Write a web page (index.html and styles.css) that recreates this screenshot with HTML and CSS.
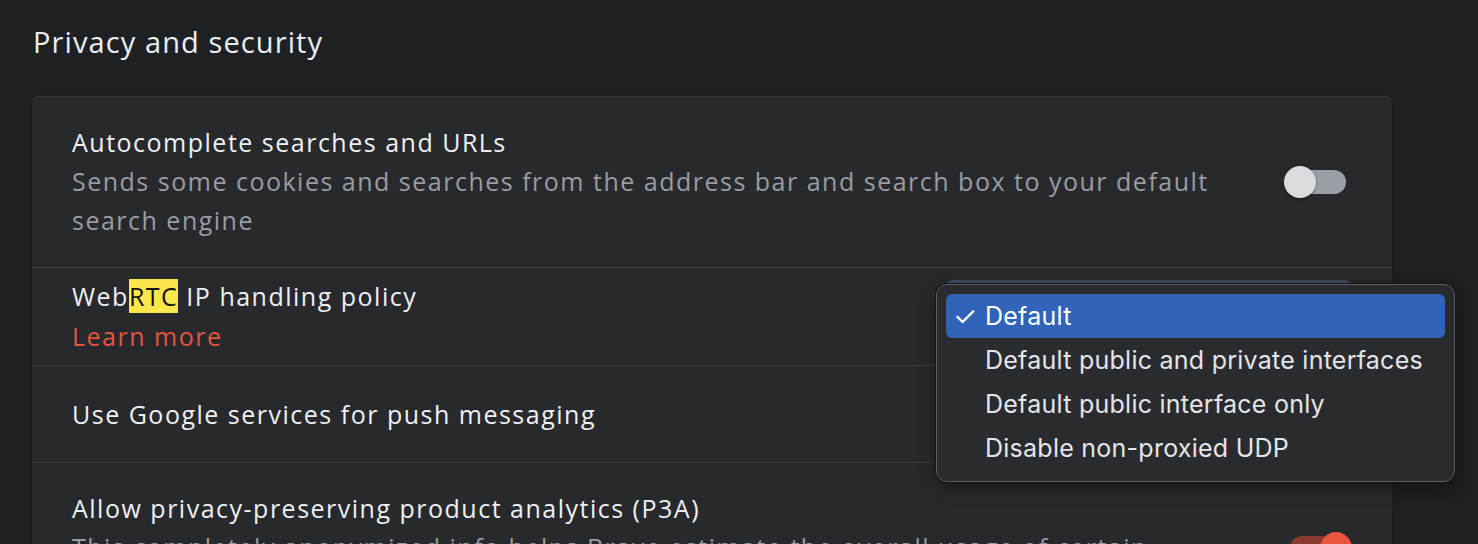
FILE: index.html
```html
<!DOCTYPE html>
<html>
<head>
<meta charset="utf-8">
<link rel="stylesheet" href="styles.css">
</head>
<body>
<div class="page">
  <h1 class="heading">Privacy and security</h1>
  <div class="card">
    <div class="row row-tall">
      <div class="text">
        <div class="title">Autocomplete searches and URLs</div>
        <div class="desc">Sends some cookies and searches from the address bar and search box to your default search engine</div>
      </div>
      <div class="toggle"><span class="knob"></span></div>
    </div>
    <div class="row row-webrtc">
      <div class="text">
        <div class="title">Web<mark class="hl">RTC</mark> IP handling policy</div>
        <div class="link">Learn more</div>
      </div>
      <div class="select"></div>
    </div>
    <div class="row row-mid">
      <div class="text">
        <div class="title">Use Google services for push messaging</div>
      </div>
    </div>
    <div class="row row-tall">
      <div class="text">
        <div class="title">Allow privacy-preserving product analytics (P3A)</div>
        <div class="desc">This completely anonymized info helps Brave estimate the overall usage of certain features and make them better for you</div>
      </div>
      <div class="toggle on"><span class="knob"></span></div>
    </div>
  </div>
  <div class="menu">
    <div class="item selected"><span class="check">✓</span>Default</div>
    <div class="item"><span class="check"></span>Default public and private interfaces</div>
    <div class="item"><span class="check"></span>Default public interface only</div>
    <div class="item"><span class="check"></span>Disable non-proxied UDP</div>
  </div>
</div>
</body>
</html>
```
FILE: styles.css
```css
html, body {
  margin: 0;
  padding: 0;
  background: #1f2024;
  overflow: hidden;
}
body {
  font-family: "Open Sans", "Lato", sans-serif;
  color: #e8eaed;
}
.page {
  position: relative;
  padding: 22px 86px 0 32px;
}
.heading {
  margin: 0 0 0 1px;
  font-weight: 400;
  font-size: 29px;
  line-height: 40px;
  letter-spacing: 1.1px;
  color: #eceef1;
}
.card {
  margin-top: 34px;
  background: #28292d;
  border-radius: 6px;
  border-top: 1px solid #36373b;
  box-shadow: 0 0 3px rgba(0,0,0,0.35);
}
.row {
  display: flex;
  align-items: center;
  padding: 0 46px 0 40px;
  border-top: 1px solid #3c3d41;
}
.row:first-child { border-top: none; }
.row-tall { padding-top: 26px; padding-bottom: 27px; }
.row-webrtc { padding-top: 9px; padding-bottom: 9px; align-items: flex-start; }
.row-mid { height: 96px; }
.text { flex: 1; min-width: 0; }
.title, .desc, .link {
  font-size: 25px;
  letter-spacing: 1.5px;
  line-height: 39px;
}
.title { color: #eef0f3; }
.desc { color: #9a9ca1; padding-right: 30px; }
.link { line-height: 40px; color: #e2553f; }
.hl {
  background: #fbe64d;
  color: #111;
  padding: 0;
}
.toggle {
  position: relative;
  width: 56px;
  height: 24px;
  border-radius: 12px;
  background: #9aa0a6;
  margin-left: 24px;
  flex: none;
}
.toggle .knob {
  position: absolute;
  left: -6px;
  top: -4px;
  width: 32px;
  height: 32px;
  border-radius: 50%;
  background: #dadce0;
  box-shadow: 0 1px 3px rgba(0,0,0,0.4);
}
.toggle.on { background: #8a3a2e; }
.toggle.on .knob { background: #e9553d; left: 30px; }
.select {
  width: 407px;
  height: 44px;
  margin-top: 3px;
  margin-right: -6px;
  border-radius: 8px;
  background: #414b61;
  flex: none;
}
.menu {
  position: absolute;
  left: 936px;
  top: 284px;
  width: 499px;
  padding: 9px 9px 11px;
  background: #2a2b2f;
  border: 1px solid #5c5d61;
  border-radius: 11px;
  box-shadow: 0 0 0 1px #151518, 0 6px 18px rgba(0,0,0,0.45);
  font-family: "Inter", "Liberation Sans", sans-serif;
}
.item {
  display: flex;
  align-items: center;
  height: 44px;
  font-size: 25px;
  letter-spacing: 0.25px;
  color: #e4e5e8;
  border-radius: 6px;
}
.item.selected { background: #3163b8; color: #fff; }
.check {
  width: 39px;
  padding-left: 7px;
  box-sizing: border-box;
  font-size: 27px;
  flex: none;
}
```
